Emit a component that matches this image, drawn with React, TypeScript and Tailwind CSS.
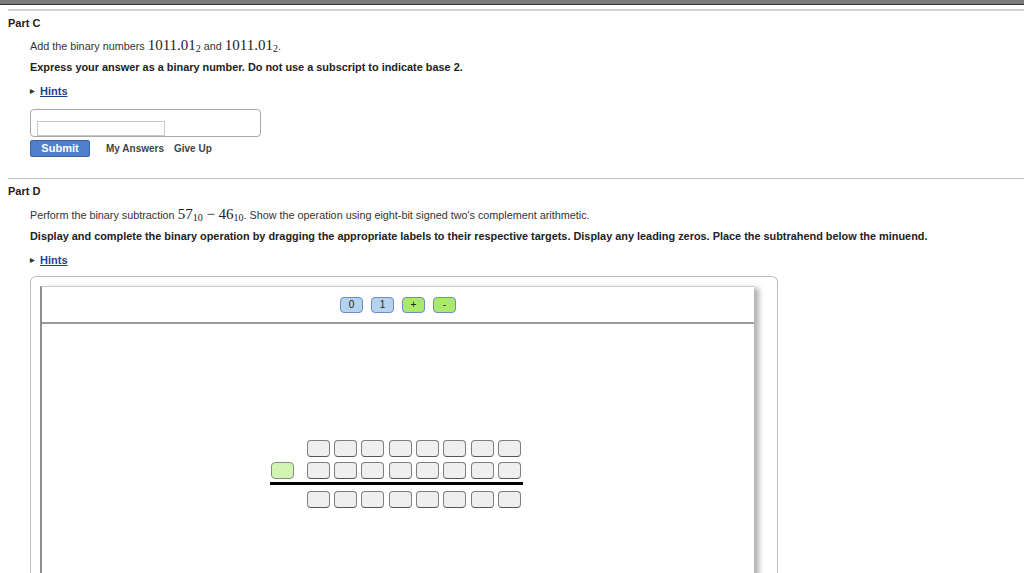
import React from "react";

const sans = { fontFamily: '"Liberation Sans", Arial, sans-serif' };

function M({ children }: { children: React.ReactNode }) {
  return (
    <span className="font-['Liberation_Serif',serif] text-[15px] text-[#222]">
      {children}
    </span>
  );
}

function Sub({ children }: { children: React.ReactNode }) {
  return <span className="relative top-[2px] text-[10px] leading-none">{children}</span>;
}

function Hints() {
  return (
    <div className="flex items-center text-[11px] leading-[14px] font-bold">
      <span className="text-[6px] text-[#333] mr-[5px]">▶</span>
      <a href="#" className="text-[#1f3f94] underline">
        Hints
      </a>
    </div>
  );
}

function Label({ text, green }: { text: string; green?: boolean }) {
  return (
    <div
      className={
        green
          ? "w-[23px] h-[16px] rounded-[4px] border border-[#6f8bc9] bg-[#a9ea6b] text-[10px] flex items-center justify-center text-[#222]"
          : "w-[23px] h-[16px] rounded-[4px] border border-[#6f8bc9] bg-[#b4d3ec] text-[10px] flex items-center justify-center text-[#222]"
      }
    >
      {text}
    </div>
  );
}

function Slots() {
  const slots = [0, 1, 2, 3, 4, 5, 6, 7];
  return (
    <div className="flex gap-[4.4px]">
      {slots.map((s) => (
        <div
          key={s}
          className="w-[23px] h-[17px] rounded-[4px] border border-[#7d7d85] border-b-[#55555c] bg-[#efefef]"
        />
      ))}
    </div>
  );
}

export default function App() {
  return (
    <div className="bg-white h-[573px] overflow-hidden text-[#333]" style={sans}>
      <div className="h-[4px] bg-[#7b7b7b]" />
      <div className="h-[1px] bg-[#333]" />

      <div className="pl-[8px]">
        {/* Part C */}
        <div className="mt-[4px] h-[2px] bg-[#d2d2d2]" />
        <div className="mt-[5px] text-[11px] font-bold leading-[14px] text-[#222]">Part C</div>
        <div className="pl-[22px]">
          <p className="mt-[6px] text-[10.8px] leading-[18px]">
            Add the binary numbers <M>1011.01<Sub>2</Sub></M> and{" "}
            <M>1011.01<Sub>2</Sub></M>.
          </p>
          <p className="mt-[5px] text-[10.9px] leading-[14px] font-bold text-[#222]">
            Express your answer as a binary number. Do not use a subscript to indicate base 2.
          </p>
          <div className="mt-[10px]">
            <Hints />
          </div>
          <div className="mt-[11px] w-[231px] h-[28px] rounded-[4px] border border-[#a8a8a8] pl-[6px] pt-[6px]">
            <input className="w-[128px] h-[15px] border border-[#c8c8c8] outline-none" />
          </div>
          <div className="mt-[3px] flex items-center">
            <button className="w-[60px] h-[17px] rounded-[2px] border border-[#3b64ab] bg-[#4f7ecb] text-white text-[11px] font-bold leading-none">
              Submit
            </button>
            <span className="ml-[16px] text-[10px] font-bold text-[#444]">My Answers</span>
            <span className="ml-[10px] text-[10px] font-bold text-[#444]">Give Up</span>
          </div>
        </div>

        {/* Part D */}
        <div className="mt-[21px] h-[1px] bg-[#bdbdbd]" />
        <div className="mt-[5px] text-[11px] font-bold leading-[14px] text-[#222]">Part D</div>
        <div className="pl-[22px]">
          <p className="mt-[7px] text-[10.8px] leading-[18px]">
            Perform the binary subtraction <M>57<Sub>10</Sub> − 46<Sub>10</Sub></M>. Show the
            operation using eight-bit signed two's complement arithmetic.
          </p>
          <p className="mt-[5px] text-[10.9px] leading-[14px] font-bold text-[#222]">
            Display and complete the binary operation by dragging the appropriate labels to their
            respective targets. Display any leading zeros. Place the subtrahend below the minuend.
          </p>
          <div className="mt-[10px]">
            <Hints />
          </div>

          <div className="mt-[9px] w-[748px] rounded-t-[6px] border border-b-0 border-[#bdbdbd] pl-[9px] pt-[9px]">
            <div className="w-[714px] h-[400px] border-t border-[#c8c8c8] border-l-2 border-l-[#8f8f8f] bg-white shadow-[5px_2px_5px_rgba(0,0,0,0.3)]">
              <div className="h-[37px] border-b-2 border-[#9a9a9a] flex items-center justify-center gap-[8px]">
                <Label text="0" />
                <Label text="1" />
                <Label text="+" green />
                <Label text="-" green />
              </div>

              <div className="mt-[116px] flex justify-center pr-[4px]">
                <div className="w-[253px]">
                  <div className="flex pl-[37px]">
                    <Slots />
                  </div>
                  <div className="mt-[5px] flex items-center pl-[1px]">
                    <div className="w-[23px] h-[17px] rounded-[4px] border border-[#8a8a8a] bg-[#d3f5b3]" />
                    <div className="ml-[13px]">
                      <Slots />
                    </div>
                  </div>
                  <div className="mt-[3px] h-[3px] bg-black" />
                  <div className="mt-[6px] flex pl-[37px]">
                    <Slots />
                  </div>
                </div>
              </div>
            </div>
          </div>
        </div>
      </div>
    </div>
  );
}
